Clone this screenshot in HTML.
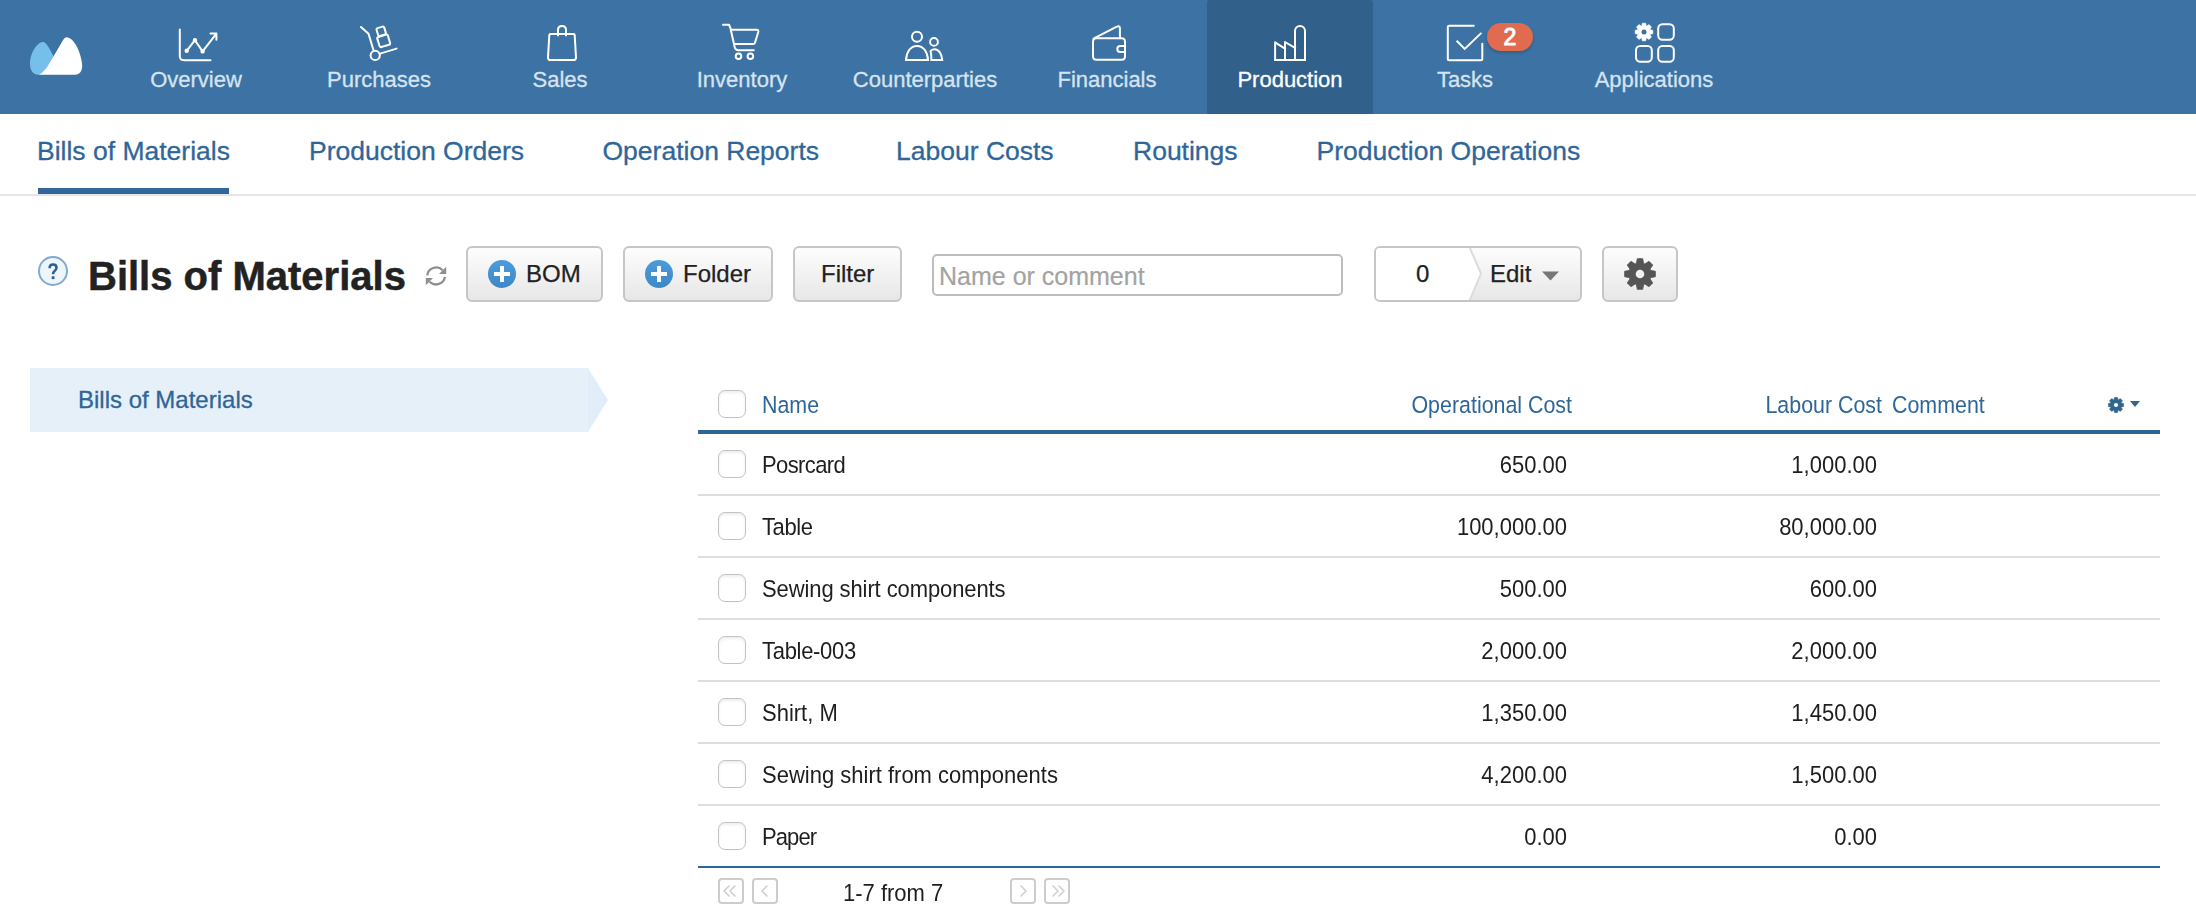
<!DOCTYPE html>
<html><head><meta charset="utf-8">
<style>
html,body{margin:0;padding:0;width:2196px;height:924px;overflow:hidden;background:#fff;font-family:"Liberation Sans",sans-serif;}
.a{position:absolute;white-space:nowrap;}
#nav{position:absolute;left:0;top:0;width:2196px;height:114px;background:#3c72a4;}
#act{position:absolute;left:1207px;top:0;width:166px;height:114px;background:#31608b;border-radius:3px 3px 0 0;}
.nt{position:absolute;top:69px;font-size:22px;line-height:22px;color:#d6e3ef;text-align:center;width:200px;-webkit-text-stroke:0.3px #d6e3ef;}
.nt.on{-webkit-text-stroke:0.3px #fff;}
.nt.on{color:#fff;}
.sn{position:absolute;top:138px;font-size:26.5px;line-height:26px;color:#2f6699;-webkit-text-stroke:0.3px #2f6699;}
#subline{position:absolute;left:0;top:194px;width:2196px;height:2px;background:#e6e6e6;}
#uline{position:absolute;left:38px;top:188px;width:191px;height:6px;background:#336699;}
.btn{position:absolute;top:246px;height:56px;box-sizing:border-box;border:2px solid #c6c6c6;border-radius:6px;background:linear-gradient(#fdfdfd,#e7e7e7);}
.bt{position:absolute;top:262px;font-size:24px;line-height:24px;color:#222;-webkit-text-stroke:0.25px #222;}
.plus{position:absolute;top:260px;width:28px;height:28px;border-radius:50%;background:linear-gradient(#4c9cdb,#3c87c7);}
.plus:before{content:"";position:absolute;left:6px;top:12px;width:16px;height:4px;background:#fff;}
.plus:after{content:"";position:absolute;left:12px;top:6px;width:4px;height:16px;background:#fff;}
.cb{position:absolute;left:718px;width:28px;height:28px;box-sizing:border-box;border:1.5px solid #c2c2c2;border-radius:7px;background:#fff;box-shadow:inset 0 2px 3px rgba(0,0,0,0.07);}
.td{position:absolute;font-size:22px;line-height:22px;color:#1e1e1e;transform:scaleY(1.08);transform-origin:0 18.6px;}
.th{position:absolute;top:394.5px;font-size:21.4px;line-height:22px;color:#2f6699;transform:scaleY(1.08);transform-origin:0 18.6px;}
.sep{position:absolute;left:698px;width:1462px;height:2px;background:#dedede;}
.pg{position:absolute;top:878px;width:26px;height:26px;box-sizing:border-box;border:2px solid #cccccc;border-radius:4px;background:#fff;}
</style></head>
<body>
<div id="nav"></div>
<div id="act"></div>

<!-- logo -->
<svg class="a" style="left:0;top:0" width="120" height="114" viewBox="0 0 120 114">
  <path d="M42.7,42 C38,42 30,52 30,64 C30,70 33,74.7 38,74.7 L40,74.7 C46,72 50,64 53.8,57 C50.5,50 46.5,42 42.7,42 Z" fill="#76bfeb"/>
  <path d="M38.9,74.7 C44,72.5 48,66 52,59 L61.5,42.7 C63,40 64.5,37.3 66.5,37.3 C70,37.3 74,41 77,47 C80,53 82.2,61 82.2,66 C82.2,71 79.5,74.7 75.3,74.7 Z" fill="#fff"/>
</svg>
<!-- nav icons -->
<svg class="a" style="left:0;top:0" width="1800" height="114" viewBox="0 0 1800 114" fill="none" stroke="#fff" stroke-width="2" stroke-linecap="round" stroke-linejoin="round">
  <!-- overview -->
  <path d="M179.8,29.5 V56 Q179.8,60.2 184,60.2 H210.5"/>
  <path d="M186.7,50.8 L194.9,40.2 L202.6,51.4 L216.2,33.8"/>
  <path d="M210.5,33.6 H216.4 V39.8"/>
  <circle cx="186.7" cy="50.8" r="1.2" fill="#fff"/>
  <circle cx="194.9" cy="40.2" r="1.2" fill="#fff"/>
  <circle cx="202.6" cy="51.4" r="1.2" fill="#fff"/>
  <!-- purchases -->
  <path d="M361,27 L368.5,33.8 L373.6,50.5"/>
  <circle cx="375.2" cy="55.4" r="4.6"/>
  <path d="M380,53.6 L396.6,48.6"/>
  <rect x="377.2" y="27.2" width="8" height="8.2" rx="1.5" transform="rotate(-17 381.2 31.3)"/>
  <rect x="378.2" y="35.6" width="11" height="10.5" rx="1.5" transform="rotate(-17 383.7 40.8)"/>
  <!-- sales -->
  <path d="M550.6,34 H573.5 Q574.6,34 574.7,35.2 L576,57.4 Q576,60 573.4,60 H550.6 Q548,60 548,57.4 L549.3,35.2 Q549.4,34 550.6,34 Z"/>
  <path d="M558,36.3 V30 Q558,26 562,26 Q566,26 566,30 V36.3" stroke-linecap="butt"/>
  <!-- inventory -->
  <path d="M723,24.7 H729 L731.2,29.8 H756.5 Q758.8,29.8 758.3,32 L755,42.6 Q754.6,43.9 753.2,43.9 H734.8"/>
  <path d="M730.7,29.5 L734.8,47.5 Q735.5,50.2 738.5,50.2 H753.8"/>
  <circle cx="738.5" cy="56.3" r="2.8"/>
  <circle cx="750.4" cy="56.3" r="2.8"/>
  <!-- counterparties -->
  <circle cx="917" cy="36.8" r="5"/>
  <path d="M906,59.9 C906.4,51.5 910.8,45.9 917,45.9 C923.2,45.9 927.6,51.5 928,59.9 Z" stroke-linejoin="miter"/>
  <circle cx="934" cy="41.9" r="3.9"/>
  <path d="M930.6,51 Q932.4,49.3 934.6,49.3 C938.8,49.3 941.8,54 942.2,59.9 H931.4 Q931.4,54.2 930.6,51 Z" stroke-linejoin="miter"/>
  <!-- financials -->
  <path d="M1096.5,38.3 H1121.5 Q1125,38.3 1125,41.8 V56.3 Q1125,59.8 1121.5,59.8 H1096.5 Q1093,59.8 1093,56.3 V41.8 Q1093,38.3 1096.5,38.3 Z"/>
  <path d="M1093.5,38.6 L1116.8,26.6 Q1119.9,25.3 1119.9,28.5 V38.3"/>
  <path d="M1125,46 H1120.3 Q1117.3,46 1117.3,49 Q1117.3,52 1120.3,52 H1125"/>
  <!-- production -->
  <path d="M1275.1,59.9 V42.3 L1285,48.6 M1285,59.9 V42 L1295,47.8 M1295,59.9 V31 A5,5 0 0 1 1305,31 V59.9 M1275.1,59.9 H1305" stroke-linecap="square"/>
  <!-- tasks -->
  <path d="M1473.8,25.8 H1449.3 Q1447.8,25.8 1447.8,27.3 V58.7 Q1447.8,60.2 1449.3,60.2 H1480.8 Q1482.3,60.2 1482.3,58.7 V43.8" stroke-linecap="round"/>
  <path d="M1456.6,40.8 L1464.7,48.9 L1481.4,32.9" stroke-linecap="butt" stroke-linejoin="miter"/>
  <!-- applications -->
  <rect x="1658.2" y="24.2" width="15.6" height="15.6" rx="4.2"/>
  <rect x="1636" y="45.9" width="15.8" height="15.8" rx="4.2"/>
  <rect x="1658.2" y="45.9" width="15.6" height="15.8" rx="4.2"/>
</svg>
<!-- app gear -->
<svg class="a" style="left:1634px;top:22px" width="20" height="20" viewBox="-10 -10 20 20">
  <path d="M-2.29,-5.97 L-1.72,-8.83 L1.72,-8.83 L2.29,-5.97 L2.60,-5.85 L5.03,-7.46 L7.46,-5.03 L5.85,-2.60 L5.97,-2.29 L8.83,-1.72 L8.83,1.72 L5.97,2.29 L5.85,2.60 L7.46,5.03 L5.03,7.46 L2.60,5.85 L2.29,5.97 L1.72,8.83 L-1.72,8.83 L-2.29,5.97 L-2.60,5.85 L-5.03,7.46 L-7.46,5.03 L-5.85,2.60 L-5.97,2.29 L-8.83,1.72 L-8.83,-1.72 L-5.97,-2.29 L-5.85,-2.60 L-7.46,-5.03 L-5.03,-7.46 L-2.60,-5.85 Z" fill="#fff" stroke="#fff" stroke-width="0.6" stroke-linejoin="round"/>
  <circle r="2.5" fill="#3c72a4"/>
</svg>
<!-- badge -->
<div class="a" style="left:1487px;top:23px;width:46px;height:28px;border-radius:14px;background:#e06b4f;box-shadow:0 2px 3px rgba(0,0,0,0.18);"></div>
<div class="a" style="left:1487px;top:26.3px;width:46px;font-size:23px;line-height:23px;text-align:center;color:#fff;-webkit-text-stroke:1px #fff;">2</div>

<div class="nt" style="left:96px">Overview</div>
<div class="nt" style="left:279px">Purchases</div>
<div class="nt" style="left:460px">Sales</div>
<div class="nt" style="left:642px">Inventory</div>
<div class="nt" style="left:825px">Counterparties</div>
<div class="nt" style="left:1007px">Financials</div>
<div class="nt on" style="left:1190px">Production</div>
<div class="nt" style="left:1365px">Tasks</div>
<div class="nt" style="left:1554px">Applications</div>

<!-- sub nav -->
<div class="sn" style="left:37px">Bills of Materials</div>
<div class="sn" style="left:309px">Production Orders</div>
<div class="sn" style="left:602.5px">Operation Reports</div>
<div class="sn" style="left:896px">Labour Costs</div>
<div class="sn" style="left:1133px">Routings</div>
<div class="sn" style="left:1316.5px">Production Operations</div>
<div id="subline"></div>
<div id="uline"></div>

<!-- toolbar -->
<div class="a" style="left:38px;top:256px;width:30px;height:30px;box-sizing:border-box;border:2px solid #81aad0;border-radius:50%;background:#eef6fd;"></div>
<svg class="a" style="left:0;top:0" width="80" height="300" viewBox="0 0 80 300"><path d="M49.6,268.3 C49.6,265.9 51.1,264.6 53,264.6 C55.1,264.6 56.5,265.9 56.5,267.8 C56.5,270.6 53.1,271 53.1,273.6 V274.3" fill="none" stroke="#2b5f93" stroke-width="2.5"/><rect x="51.7" y="276.3" width="2.8" height="2.8" fill="#2b5f93"/></svg>
<div class="a" style="left:88px;top:255.5px;font-size:40px;line-height:40px;font-weight:bold;color:#222;-webkit-text-stroke:0.5px #222;">Bills of Materials</div>
<svg class="a" style="left:0;top:0;filter:blur(0.35px)" width="460" height="300" viewBox="0 0 460 300" fill="none" stroke="#8e8e8e" stroke-width="2.3">
  <path d="M427.2,275.4 A9,8.8 0 0 1 442.6,270.2"/>
  <path d="M444.9,276.8 A9,8.8 0 0 1 429.6,281.8"/>
  <path d="M446.2,266.8 V274 H439 Z" fill="#8e8e8e" stroke="none"/>
  <path d="M425.8,285.2 V278 H433 Z" fill="#8e8e8e" stroke="none"/>
</svg>

<div class="btn" style="left:466px;width:137px"></div>
<div class="plus" style="left:488px"></div>
<div class="bt" style="left:526px">BOM</div>
<div class="btn" style="left:623px;width:150px"></div>
<div class="plus" style="left:645px"></div>
<div class="bt" style="left:683px">Folder</div>
<div class="btn" style="left:793px;width:109px"></div>
<div class="bt" style="left:821px">Filter</div>

<div class="a" style="left:932px;top:254px;width:411px;height:42px;box-sizing:border-box;border:2px solid #bdbdbd;border-radius:5px;background:#fff;"></div>
<div class="a" style="left:939px;top:263.5px;font-size:25px;line-height:25px;color:#a3a3a3;-webkit-text-stroke:0.2px #a3a3a3;">Name or comment</div>

<div class="btn" style="left:1374px;width:208px;overflow:hidden">
  <svg style="position:absolute;left:-2px;top:-2px" width="208" height="56" viewBox="0 0 208 56">
    <path d="M0,0 H95 L107,27.5 L95,56 H0 Z" fill="#fff"/>
    <path d="M95,0 L107,27.5 L95,56" fill="none" stroke="#dcdcdc" stroke-width="2"/>
  </svg>
</div>
<div class="bt" style="left:1416px;top:262px">0</div>
<div class="bt" style="left:1490px;top:262px">Edit</div>
<svg class="a" style="left:1542px;top:271px" width="18" height="10" viewBox="0 0 18 10"><path d="M0,0.5 H17 L8.5,9.5 Z" fill="#777"/></svg>

<div class="btn" style="left:1602px;width:76px"></div>
<svg class="a" style="left:1624px;top:258px" width="32" height="32" viewBox="-16 -16 32 32">
  <path d="M-3.65,-10.59 L-2.71,-15.36 L2.71,-15.36 L3.65,-10.59 L4.91,-10.07 L8.95,-12.78 L12.78,-8.95 L10.07,-4.91 L10.59,-3.65 L15.36,-2.71 L15.36,2.71 L10.59,3.65 L10.07,4.91 L12.78,8.95 L8.95,12.78 L4.91,10.07 L3.65,10.59 L2.71,15.36 L-2.71,15.36 L-3.65,10.59 L-4.91,10.07 L-8.95,12.78 L-12.78,8.95 L-10.07,4.91 L-10.59,3.65 L-15.36,2.71 L-15.36,-2.71 L-10.59,-3.65 L-10.07,-4.91 L-12.78,-8.95 L-8.95,-12.78 L-4.91,-10.07 Z" fill="#555" stroke="#555" stroke-width="0.8" stroke-linejoin="round"/>
  <circle r="4.3" fill="#f1f1f1"/>
</svg>

<!-- sidebar -->
<svg class="a" style="left:30px;top:368px" width="580" height="64" viewBox="0 0 580 64">
  <path d="M0,0 H558 V64 H0 Z" fill="#e5f0f9"/><path d="M558,0 L578,32 L558,64 Z" fill="#e1eef9"/>
</svg>
<div class="a" style="left:78px;top:388px;font-size:24px;line-height:24px;color:#2f6699;-webkit-text-stroke:0.3px #2f6699;">Bills of Materials</div>

<!-- table header -->
<div class="cb" style="top:390px"></div>
<div class="th" style="left:762px">Name</div>
<div class="th" style="left:1300px;width:272px;text-align:right">Operational Cost</div>
<div class="th" style="left:1600px;width:282px;text-align:right">Labour Cost</div>
<div class="th" style="left:1892px">Comment</div>
<svg class="a" style="left:2106px;top:395px" width="36" height="20" viewBox="0 0 36 20">
  <g transform="translate(10 10)"><path d="M-2.01,-5.23 L-1.47,-7.56 L1.47,-7.56 L2.01,-5.23 L2.28,-5.12 L4.31,-6.38 L6.38,-4.31 L5.12,-2.28 L5.23,-2.01 L7.56,-1.47 L7.56,1.47 L5.23,2.01 L5.12,2.28 L6.38,4.31 L4.31,6.38 L2.28,5.12 L2.01,5.23 L1.47,7.56 L-1.47,7.56 L-2.01,5.23 L-2.28,5.12 L-4.31,6.38 L-6.38,4.31 L-5.12,2.28 L-5.23,2.01 L-7.56,1.47 L-7.56,-1.47 L-5.23,-2.01 L-5.12,-2.28 L-6.38,-4.31 L-4.31,-6.38 L-2.28,-5.12 Z" fill="#2f6690" stroke="#2f6690" stroke-width="0.6" stroke-linejoin="round"/><circle r="2.1" fill="#fff"/></g>
  <path d="M24,6 H34 L29,12 Z" fill="#2f6690"/>
</svg>
<div class="a" style="left:698px;top:430px;width:1462px;height:4px;background:#2f6596;"></div>

<!-- rows -->
<div class="cb" style="top:450px"></div>
<div class="td" style="left:762px;top:455px;letter-spacing:-0.6px">Posrcard</div>
<div class="td" style="left:1300px;width:267px;text-align:right;top:455px">650.00</div>
<div class="td" style="left:1600px;width:277px;text-align:right;top:455px">1,000.00</div>
<div class="sep" style="top:494px"></div>
<div class="cb" style="top:512px"></div>
<div class="td" style="left:762px;top:517px;letter-spacing:-0.4px">Table</div>
<div class="td" style="left:1300px;width:267px;text-align:right;top:517px">100,000.00</div>
<div class="td" style="left:1600px;width:277px;text-align:right;top:517px">80,000.00</div>
<div class="sep" style="top:556px"></div>
<div class="cb" style="top:574px"></div>
<div class="td" style="left:762px;top:579px;letter-spacing:-0.1px">Sewing shirt components</div>
<div class="td" style="left:1300px;width:267px;text-align:right;top:579px">500.00</div>
<div class="td" style="left:1600px;width:277px;text-align:right;top:579px">600.00</div>
<div class="sep" style="top:618px"></div>
<div class="cb" style="top:636px"></div>
<div class="td" style="left:762px;top:641px;letter-spacing:-0.3px">Table-003</div>
<div class="td" style="left:1300px;width:267px;text-align:right;top:641px">2,000.00</div>
<div class="td" style="left:1600px;width:277px;text-align:right;top:641px">2,000.00</div>
<div class="sep" style="top:680px"></div>
<div class="cb" style="top:698px"></div>
<div class="td" style="left:762px;top:703px">Shirt, M</div>
<div class="td" style="left:1300px;width:267px;text-align:right;top:703px">1,350.00</div>
<div class="td" style="left:1600px;width:277px;text-align:right;top:703px">1,450.00</div>
<div class="sep" style="top:742px"></div>
<div class="cb" style="top:760px"></div>
<div class="td" style="left:762px;top:765px">Sewing shirt from components</div>
<div class="td" style="left:1300px;width:267px;text-align:right;top:765px">4,200.00</div>
<div class="td" style="left:1600px;width:277px;text-align:right;top:765px">1,500.00</div>
<div class="sep" style="top:804px"></div>
<div class="cb" style="top:822px"></div>
<div class="td" style="left:762px;top:827px;letter-spacing:-0.9px">Paper</div>
<div class="td" style="left:1300px;width:267px;text-align:right;top:827px">0.00</div>
<div class="td" style="left:1600px;width:277px;text-align:right;top:827px">0.00</div>
<div class="a" style="left:698px;top:866px;width:1462px;height:2px;background:#2f6596;"></div>
<div class="pg" style="left:718px"></div><svg class="a" style="left:718px;top:878px" width="26" height="26" viewBox="0 0 26 26" fill="none" stroke="#cfcfcf" stroke-width="1.6" stroke-linecap="round" stroke-linejoin="round"><path d="M11,8 L6,13 L11,18 M17,8 L12,13 L17,18"/></svg>
<div class="pg" style="left:752px"></div><svg class="a" style="left:752px;top:878px" width="26" height="26" viewBox="0 0 26 26" fill="none" stroke="#cfcfcf" stroke-width="1.6" stroke-linecap="round" stroke-linejoin="round"><path d="M15,8 L10,13 L15,18"/></svg>
<div class="td" style="left:843px;top:883px">1-7 from 7</div>
<div class="pg" style="left:1010px"></div><svg class="a" style="left:1010px;top:878px" width="26" height="26" viewBox="0 0 26 26" fill="none" stroke="#cfcfcf" stroke-width="1.6" stroke-linecap="round" stroke-linejoin="round"><path d="M11,8 L16,13 L11,18"/></svg>
<div class="pg" style="left:1044px"></div><svg class="a" style="left:1044px;top:878px" width="26" height="26" viewBox="0 0 26 26" fill="none" stroke="#cfcfcf" stroke-width="1.6" stroke-linecap="round" stroke-linejoin="round"><path d="M9,8 L14,13 L9,18 M15,8 L20,13 L15,18"/></svg>
</body></html>
